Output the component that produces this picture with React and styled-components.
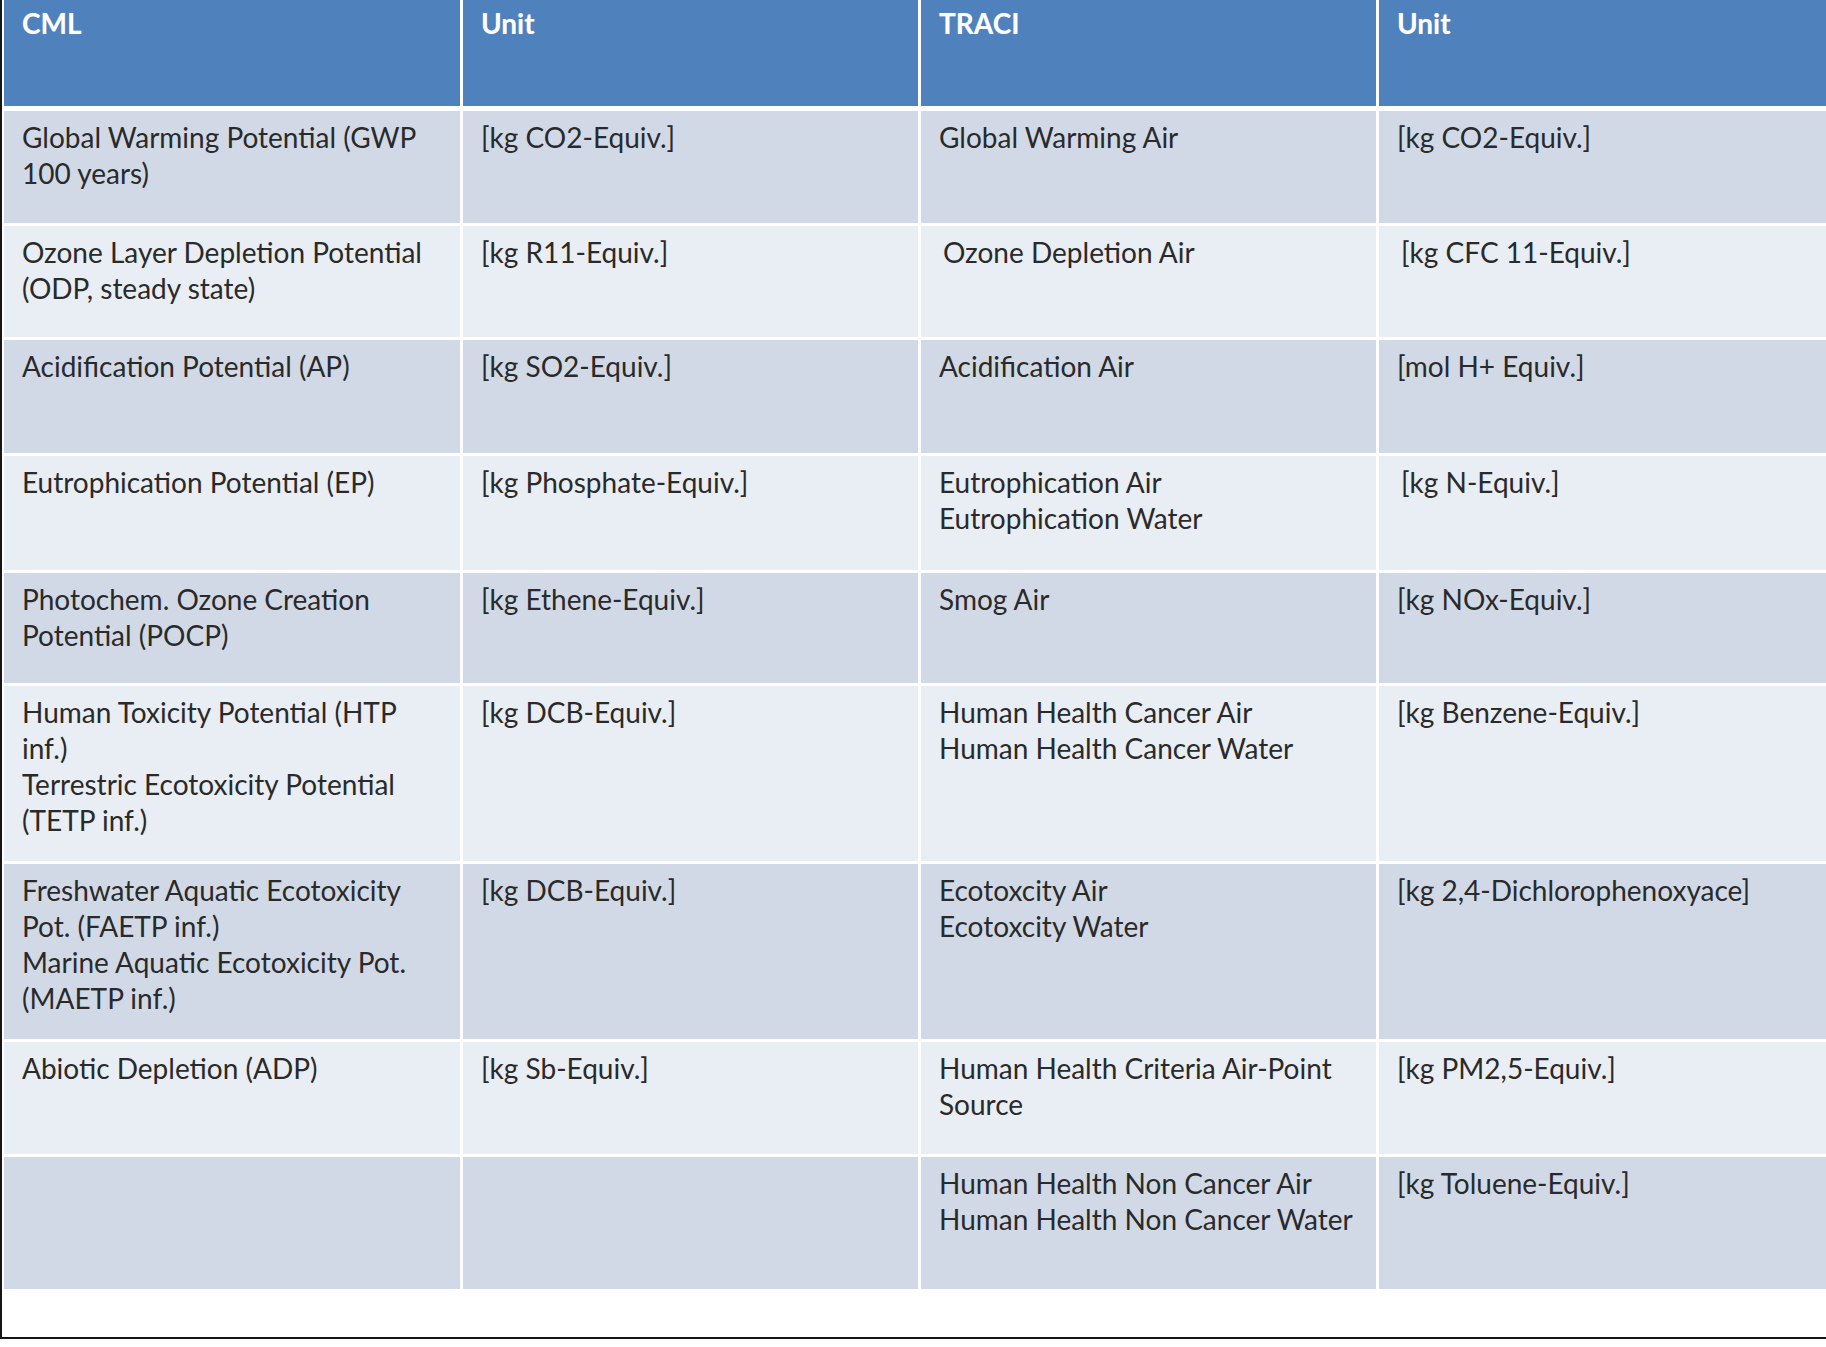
import React from 'react'
import styled, { createGlobalStyle } from 'styled-components';

const GlobalStyle = createGlobalStyle`
  html, body {
    margin: 0;
    padding: 0;
    background: #ffffff;
  }
  body {
    font-family: Lato, "Open Sans", "Liberation Sans", sans-serif;
  }
`;

const Frame = styled.div`
  box-sizing: border-box;
  width: 100%;
  height: 1339px;
  border-left: 2px solid #151515;
  border-bottom: 2px solid #151515;
  padding-left: 2px;
  overflow: hidden;
`;

const Table = styled.div`
  display: flex;
  flex-direction: column;
  gap: 3px;
`;

const Row = styled.div`
  display: grid;
  grid-template-columns: 456px 455px 455px 1fr;
  column-gap: 3px;
  min-height: ${p => p.$height}px;
  margin-bottom: ${p => p.$header ? 2 : 0}px;
`;

const HeadCell = styled.div`
  background: #4f81bd;
  color: #ffffff;
  font-weight: 700;
  font-size: 28px;
  line-height: 36px;
  padding: 5px 18px 0;
  height: 106px;
  box-sizing: border-box;
  text-shadow: 0 0 1px rgba(255, 255, 255, 0.3);
`;

const Cell = styled.div`
  background: ${p => p.$shade ? '#d1d9e7' : '#e9edf4'};
  color: #2a2a2a;
  font-size: 28px;
  line-height: 36px;
  padding: 8px 18px 22px ${p => p.$indent ? 22 : 18}px;
  white-space: nowrap;
`;

const headers = ['CML', 'Unit', 'TRACI', 'Unit'];

// row heights as measured on the slide
const heights = [112, 111, 113, 114, 110, 175, 175, 112, 132];

const rows = [
  [['Global Warming Potential (GWP', '100 years)'], ['[kg CO2-Equiv.]'], ['Global Warming Air'], ['[kg CO2-Equiv.]']],
  [['Ozone Layer Depletion Potential', '(ODP, steady state)'], ['[kg R11-Equiv.]'], ['Ozone Depletion Air', true], ['[kg CFC 11-Equiv.]', true]],
  [['Acidification Potential (AP)'], ['[kg SO2-Equiv.]'], ['Acidification Air'], ['[mol H+ Equiv.]']],
  [['Eutrophication Potential (EP)'], ['[kg Phosphate-Equiv.]'], ['Eutrophication Air', 'Eutrophication Water'], ['[kg N-Equiv.]', true]],
  [['Photochem. Ozone Creation', 'Potential (POCP)'], ['[kg Ethene-Equiv.]'], ['Smog Air'], ['[kg NOx-Equiv.]']],
  [['Human Toxicity Potential (HTP', 'inf.)', 'Terrestric Ecotoxicity Potential', '(TETP inf.)'], ['[kg DCB-Equiv.]'], ['Human Health Cancer Air', 'Human Health Cancer Water'], ['[kg Benzene-Equiv.]']],
  [['Freshwater Aquatic Ecotoxicity', 'Pot. (FAETP inf.)', 'Marine Aquatic Ecotoxicity Pot.', '(MAETP inf.)'], ['[kg DCB-Equiv.]'], ['Ecotoxcity Air', 'Ecotoxcity Water'], ['[kg 2,4-Dichlorophenoxyace]']],
  [['Abiotic Depletion (ADP)'], ['[kg Sb-Equiv.]'], ['Human Health Criteria Air-Point', 'Source'], ['[kg PM2,5-Equiv.]']],
  [[], [], ['Human Health Non Cancer Air', 'Human Health Non Cancer Water'], ['[kg Toluene-Equiv.]']],
];

const CellText = ({ lines }) => {
  const text = lines.filter(l => typeof l === 'string');
  return text.map((line, i) => (
    <React.Fragment key={i}>
      {i > 0 && <br />}
      {line}
    </React.Fragment>
  ));
};

const App = () => {
  return (
    <Frame>
      <GlobalStyle />
      <Table>
        <Row $header $height={106}>
          {headers.map((h, i) => <HeadCell key={i}>{h}</HeadCell>)}
        </Row>
        {rows.map((row, r) => (
          <Row key={r} $height={heights[r]}>
            {row.map((lines, c) => (
              <Cell key={c} $shade={r % 2 === 0} $indent={lines.includes(true)}>
                <CellText lines={lines} />
              </Cell>
            ))}
          </Row>
        ))}
      </Table>
    </Frame>
  )
}

export default App
